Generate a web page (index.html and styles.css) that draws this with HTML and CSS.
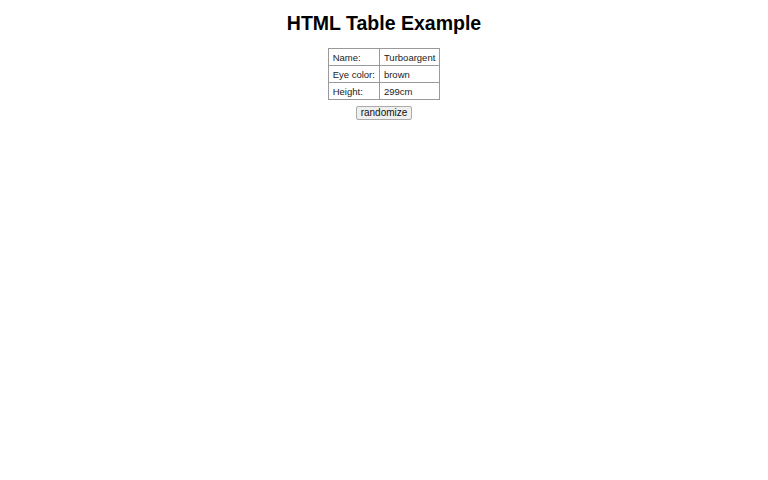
FILE: index.html
```html
<!DOCTYPE html>
<html>
<head>
<meta charset="utf-8">
<link rel="stylesheet" href="styles.css">
</head>
<body>
<h1 class="title">HTML Table Example</h1>
<table class="info">
<tr><td>Name:</td><td>Turboargent</td></tr>
<tr><td>Eye color:</td><td>brown</td></tr>
<tr><td>Height:</td><td>299cm</td></tr>
</table>
<div class="actions"><button class="btn">randomize</button></div>
</body>
</html>
```
FILE: styles.css
```css
body {
  margin: 0;
  font-family: "Liberation Sans", Arial, sans-serif;
  background: #fff;
  color: #000;
  text-align: center;
}
.title {
  font-size: 19.5px;
  font-weight: bold;
  margin: 12px 0 13px;
  line-height: 23px;
}
.info {
  border-collapse: collapse;
  margin: 0 auto;
  font-size: 9.5px;
  text-align: left;
  color: #222;
}
.info td {
  border: 1px solid #999;
  padding: 0 4px;
  height: 16px;
}
.actions {
  margin-top: 6px;
}
.btn {
  font-family: "Liberation Sans", Arial, sans-serif;
  font-size: 10px;
  padding: 0 4px;
  height: 14px;
  line-height: 12px;
  border: 1px solid #aaa;
  border-radius: 2px;
  background: #efefef;
  color: #111;
  vertical-align: top;
}
```
